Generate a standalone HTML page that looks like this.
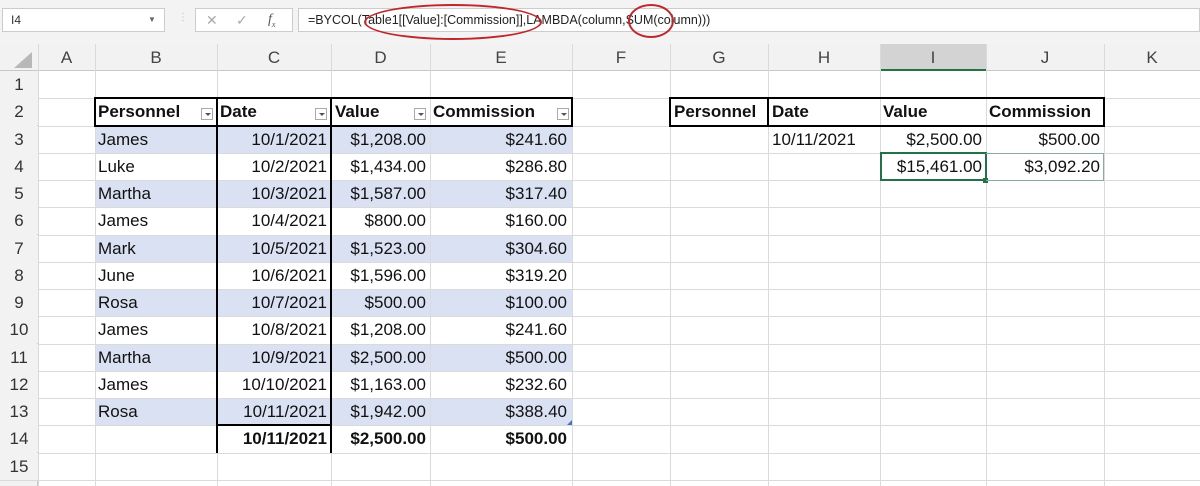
<!DOCTYPE html><html><head><style>
body{margin:0;width:1200px;height:486px;overflow:hidden;background:#fff;font-family:"Liberation Sans",sans-serif;position:relative}
div{position:absolute;box-sizing:border-box}
.r{height:27px;left:0;width:1200px}
.r span{position:absolute;top:0;height:27px;line-height:28px;font-size:17px;color:#111;white-space:nowrap;overflow:visible}
.rh{left:0;width:38px;text-align:center;color:#333!important;background:#f2f2f2}
.B{left:98px}.Cr{left:217px;width:110px;text-align:right}.Dr{left:331px;width:95px;text-align:right}.Er{left:430px;width:137px;text-align:right}
.Cl{left:220px}.Dl{left:335px}.El{left:433px}
.G{left:674px}.Hl{left:772px}.Hr{left:768px;width:108px;text-align:right}.Il{left:883px}.Ir{left:880px;width:102px;text-align:right}.Jl{left:989px}.Jr{left:986px;width:114px;text-align:right}
.b{font-weight:bold}
.v{top:44px;width:1px;height:442px;background:#dadada}
.h{left:0;width:1200px;height:1px;background:#dadada}
.band{left:95px;width:477px;height:27px;background:#d9e1f2}
.ch{top:44px;height:27px;line-height:27px;text-align:center;font-size:17px;color:#444;background:#f2f2f2}
.dd{width:12px;height:12px;border:1px solid #aaa;background:#fff;top:8px}
.dd:after{content:"";position:absolute;left:3px;top:4px;border-left:3px solid transparent;border-right:3px solid transparent;border-top:3px solid #555}
</style></head><body>
<div style="left:0;top:0;width:1200px;height:44px;background:#f3f3f3"></div>
<div style="left:2px;top:8px;width:163px;height:24px;background:#fff;border:1px solid #ccc;font-size:12px;line-height:22px;padding-left:8px;color:#333">I4<span style="position:absolute;left:145px;font-size:8px;color:#666">▼</span></div>
<div style="left:178px;top:12px;color:#bbb;font-size:10px">⋮</div>
<div style="left:195px;top:8px;width:98px;height:24px;background:#fff;border:1px solid #ccc;font-size:14px;line-height:22px;color:#aaa"><span style="position:absolute;left:10px">✕</span><span style="position:absolute;left:40px">✓</span><span style="position:absolute;left:72px;color:#555;font-style:italic;font-family:'Liberation Serif',serif">f<sub style="font-size:8px">x</sub></span></div>
<div style="left:298px;top:8px;width:902px;height:24px;background:#fff;border:1px solid #ccc;font-size:12.5px;line-height:22px;padding-left:9px;color:#222">=BYCOL(Table1[[Value]:[Commission]],LAMBDA(column,SUM(column)))</div>
<div style="left:364px;top:4px;width:178px;height:36px;border:2.5px solid #c0272d;border-radius:50%"></div>
<div style="left:628px;top:4px;width:46px;height:34px;border:2.5px solid #c0272d;border-radius:50%"></div>
<div style="left:0;top:44px;width:1200px;height:27px;background:#f2f2f2;border-bottom:1px solid #c8c8c8"></div>
<div style="left:0;top:71px;width:38px;height:415px;background:#f2f2f2;border-right:1px solid #c8c8c8"></div>
<div style="left:14px;top:52px;width:0;height:0;border-left:18px solid transparent;border-bottom:16px solid #b8b8b8"></div>
<div style="left:880px;top:44px;width:106px;height:27px;background:#d3d3d3;border-bottom:2px solid #217346"></div>
<div class="ch" style="left:38px;width:57px;background:none">A</div><div class="ch" style="left:95px;width:122px;background:none">B</div><div class="ch" style="left:217px;width:114px;background:none">C</div><div class="ch" style="left:331px;width:99px;background:none">D</div><div class="ch" style="left:430px;width:142px;background:none">E</div><div class="ch" style="left:572px;width:98px;background:none">F</div><div class="ch" style="left:670px;width:98px;background:none">G</div><div class="ch" style="left:768px;width:112px;background:none">H</div><div class="ch" style="left:880px;width:106px;background:none">I</div><div class="ch" style="left:986px;width:118px;background:none">J</div><div class="ch" style="left:1104px;width:96px;background:none">K</div>
<div class="band" style="top:126px"></div><div class="band" style="top:180px"></div><div class="band" style="top:235px"></div><div class="band" style="top:289px"></div><div class="band" style="top:344px"></div><div class="band" style="top:398px"></div>
<div class="v" style="left:38px"></div><div class="v" style="left:95px"></div><div class="v" style="left:217px"></div><div class="v" style="left:331px"></div><div class="v" style="left:430px"></div><div class="v" style="left:572px"></div><div class="v" style="left:670px"></div><div class="v" style="left:768px"></div><div class="v" style="left:880px"></div><div class="v" style="left:986px"></div><div class="v" style="left:1104px"></div>
<div class="h" style="top:98px"></div><div class="h" style="top:126px"></div><div class="h" style="top:153px"></div><div class="h" style="top:180px"></div><div class="h" style="top:207px"></div><div class="h" style="top:235px"></div><div class="h" style="top:262px"></div><div class="h" style="top:289px"></div><div class="h" style="top:316px"></div><div class="h" style="top:344px"></div><div class="h" style="top:371px"></div><div class="h" style="top:398px"></div><div class="h" style="top:425px"></div><div class="h" style="top:453px"></div><div class="h" style="top:480px"></div>
<div style="left:94px;top:97px;width:479px;height:30px;border:2px solid #000"></div>
<div style="left:216px;top:97px;width:2px;height:356px;background:#000"></div>
<div style="left:330px;top:97px;width:2px;height:356px;background:#000"></div>
<div style="left:217px;top:424px;width:114px;height:2px;background:#000"></div>
<div style="left:669px;top:97px;width:436px;height:30px;border:2px solid #000"></div>
<div style="left:767px;top:97px;width:2px;height:30px;background:#000"></div>
<div style="left:880px;top:152px;width:107px;height:29px;border:2px solid #217346"></div>
<div style="left:983px;top:178px;width:5px;height:5px;background:#217346"></div>
<div style="left:986px;top:153px;width:118px;height:28px;border:1px solid #8aa;border-left:none"></div>
<div class="r" style="top:71px"><span class="rh">1</span></div>
<div class="r b" style="top:98px"><span class="rh" style="font-weight:normal">2</span><span class="B b">Personnel</span><span class="Cl b">Date</span><span class="Dl b">Value</span><span class="El b">Commission</span><span class="G b">Personnel</span><span class="Hl b">Date</span><span class="Il b">Value</span><span class="Jl b">Commission</span></div>
<div class="dd" style="left:201px;top:108px"></div><div class="dd" style="left:315px;top:108px"></div><div class="dd" style="left:414px;top:108px"></div><div class="dd" style="left:557px;top:108px"></div>
<div class="r" style="top:126px"><span class="rh">3</span><span class="B">James</span><span class="Cr">10/1/2021</span><span class="Dr">$1,208.00</span><span class="Er">$241.60</span><span class="Hl">10/11/2021</span><span class="Ir">$2,500.00</span><span class="Jr">$500.00</span></div>
<div class="r" style="top:153px"><span class="rh">4</span><span class="B">Luke</span><span class="Cr">10/2/2021</span><span class="Dr">$1,434.00</span><span class="Er">$286.80</span><span class="Ir">$15,461.00</span><span class="Jr">$3,092.20</span></div>
<div class="r" style="top:180px"><span class="rh">5</span><span class="B">Martha</span><span class="Cr">10/3/2021</span><span class="Dr">$1,587.00</span><span class="Er">$317.40</span></div>
<div class="r" style="top:207px"><span class="rh">6</span><span class="B">James</span><span class="Cr">10/4/2021</span><span class="Dr">$800.00</span><span class="Er">$160.00</span></div>
<div class="r" style="top:235px"><span class="rh">7</span><span class="B">Mark</span><span class="Cr">10/5/2021</span><span class="Dr">$1,523.00</span><span class="Er">$304.60</span></div>
<div class="r" style="top:262px"><span class="rh">8</span><span class="B">June</span><span class="Cr">10/6/2021</span><span class="Dr">$1,596.00</span><span class="Er">$319.20</span></div>
<div class="r" style="top:289px"><span class="rh">9</span><span class="B">Rosa</span><span class="Cr">10/7/2021</span><span class="Dr">$500.00</span><span class="Er">$100.00</span></div>
<div class="r" style="top:316px"><span class="rh">10</span><span class="B">James</span><span class="Cr">10/8/2021</span><span class="Dr">$1,208.00</span><span class="Er">$241.60</span></div>
<div class="r" style="top:344px"><span class="rh">11</span><span class="B">Martha</span><span class="Cr">10/9/2021</span><span class="Dr">$2,500.00</span><span class="Er">$500.00</span></div>
<div class="r" style="top:371px"><span class="rh">12</span><span class="B">James</span><span class="Cr">10/10/2021</span><span class="Dr">$1,163.00</span><span class="Er">$232.60</span></div>
<div class="r" style="top:398px"><span class="rh">13</span><span class="B">Rosa</span><span class="Cr">10/11/2021</span><span class="Dr">$1,942.00</span><span class="Er">$388.40</span></div>
<div class="r" style="top:425px"><span class="rh">14</span><span class="Cr b">10/11/2021</span><span class="Dr b">$2,500.00</span><span class="Er b">$500.00</span></div>
<div class="r" style="top:453px"><span class="rh">15</span></div>
<div style="left:567px;top:420px;width:0;height:0;border-left:5px solid transparent;border-bottom:5px solid #4472c4"></div>
</body></html>
